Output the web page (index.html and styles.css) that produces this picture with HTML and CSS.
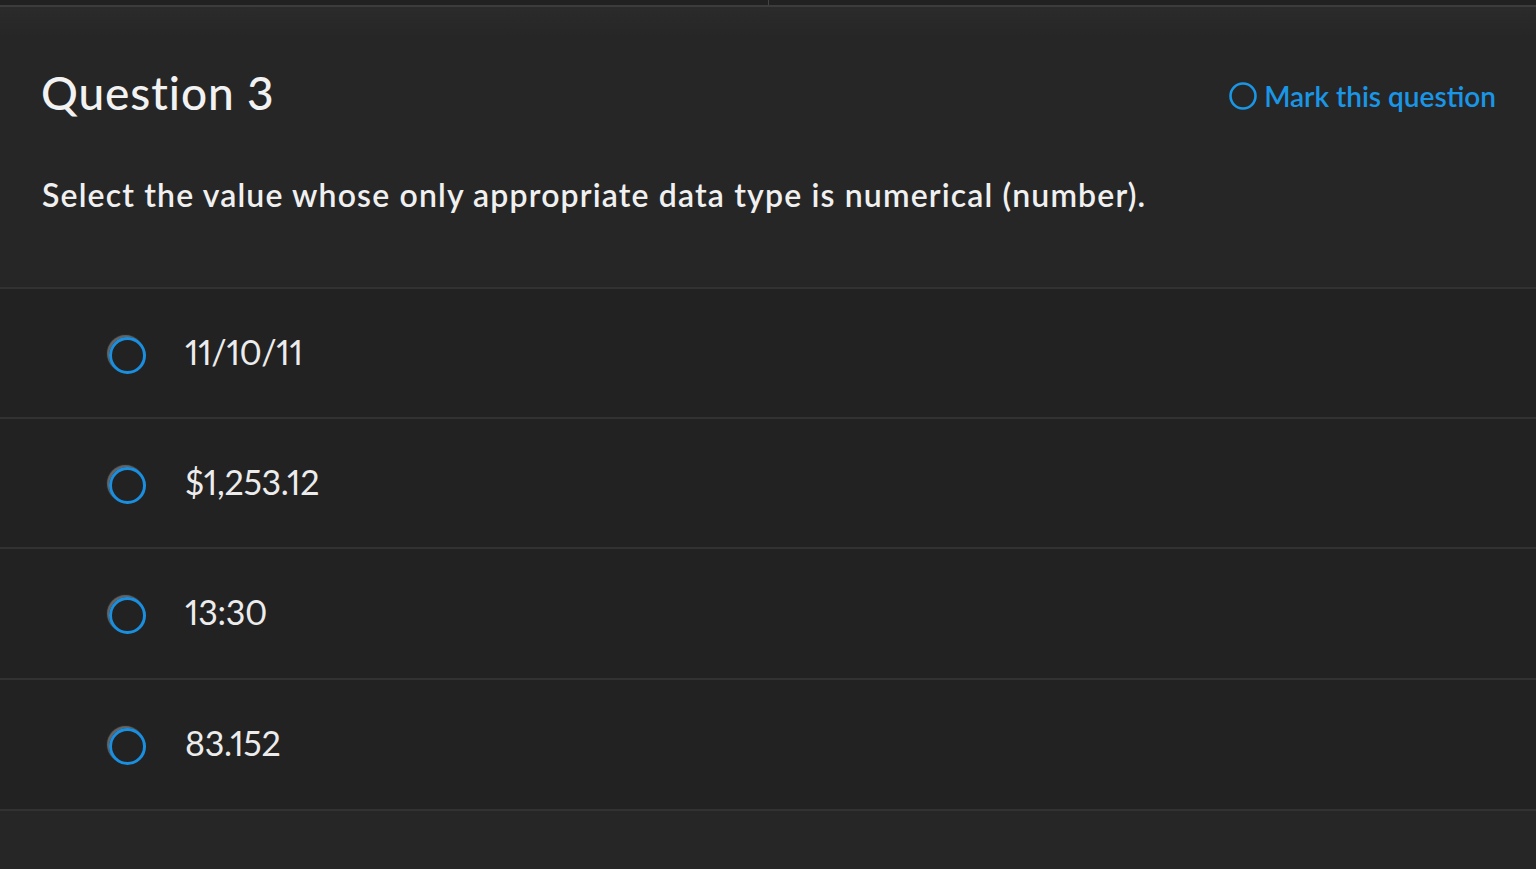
FILE: index.html
```html
<!DOCTYPE html>
<html lang="en">
<head>
<meta charset="utf-8">
<title>Question 3</title>
<link rel="stylesheet" href="styles.css">
</head>
<body>
<div class="topbar"><div class="tab"></div><div class="tab"></div></div>
<div class="topline"></div>
<main class="panel">
  <header class="head">
    <h1 class="title">Question 3</h1>
    <a class="mark" href="#">
      <svg class="mark-icon" viewBox="0 0 28 28" width="28" height="28"><circle cx="14" cy="14" r="12.5" fill="none" stroke="#1a96e6" stroke-width="2.6"/></svg>
      <span>Mark this question</span>
    </a>
  </header>
  <p class="prompt">Select the value whose only appropriate data type is numerical (number).</p>
  <ul class="options">
    <li class="option"><span class="radio"></span><span class="label">11/10/11</span></li>
    <li class="option"><span class="radio"></span><span class="label">$1,253.12</span></li>
    <li class="option"><span class="radio"></span><span class="label">13:30</span></li>
    <li class="option"><span class="radio"></span><span class="label">83.152</span></li>
  </ul>
</main>
</body>
</html>
```

FILE: styles.css
```css
html, body {
  margin: 0;
  padding: 0;
  background: #262626;
  height: 100%;
  overflow: hidden;
}
body {
  font-family: Lato, "Noto Sans", sans-serif;
  color: #f0f0f0;
}
.topbar {
  height: 5px;
  display: flex;
  background: #212121;
}
.tab {
  flex: 1;
}
.tab + .tab {
  border-left: 1px solid #444;
}
.topline {
  height: 2px;
  background: #3c3c3c;
}
.panel {
  background: linear-gradient(#2b2b2b, #262626 30px);
}
.head {
  display: flex;
  justify-content: space-between;
  align-items: center;
  padding: 55px 40px 0 41px;
  height: 60px;
}
.title {
  margin: 0;
  font-size: 46px;
  font-weight: 500;
  letter-spacing: 0.9px;
  color: #f2f2f2;
}
.mark {
  display: flex;
  align-items: center;
  gap: 7px;
  color: #1a96e6;
  text-decoration: none;
  font-size: 28px;
  font-weight: 600;
  margin-top: 8px;
}
.mark-icon {
  display: block;
}
.prompt {
  margin: 0;
  padding: 53px 42px 0 42px;
  height: 112px;
  font-size: 32px;
  font-weight: 600;
  letter-spacing: 1.15px;
  color: #f0f0f0;
}
.options {
  list-style: none;
  margin: 0;
  padding: 0;
  border-top: 2px solid #323232;
}
.option {
  height: 128px;
  background: #222222;
  border-bottom: 2px solid #323232;
  display: flex;
  align-items: center;
  padding-left: 109px;
  gap: 39px;
}
.option:nth-child(n+3) {
  height: 129px;
}
.radio {
  width: 31px;
  height: 31px;
  border: 3px solid #1a8fe0;
  border-radius: 50%;
  box-shadow: -2px -2px 1px 0 #666;
  margin-top: 4px;
}
.label {
  font-size: 34px;
  font-weight: 400;
  color: #ececec;
  font-variant-numeric: proportional-nums;
  letter-spacing: -0.3px;
  margin-top: -4px;
}
```
